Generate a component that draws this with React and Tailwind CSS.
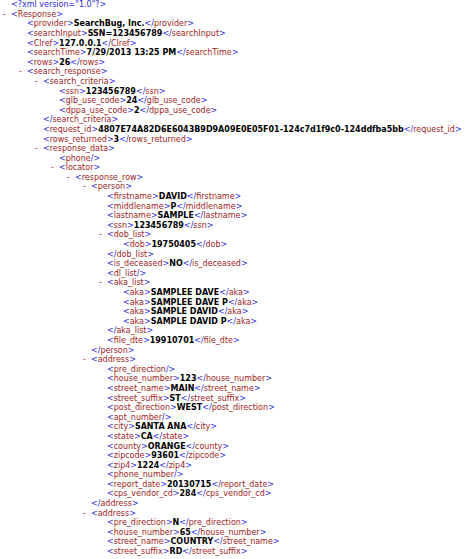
import React from "react";

const L = [
  { d: 0, pi: true },
  { d: 0, m: true, o: "Response" },
  { d: 1, o: "provider", v: "SearchBug, Inc.", c: "provider" },
  { d: 1, o: "searchInput", v: "SSN=123456789", c: "searchInput" },
  { d: 1, o: "Clref", v: "127.0.0.1", c: "Clref" },
  { d: 1, o: "searchTime", v: "7/29/2013 13:25 PM", c: "searchTime" },
  { d: 1, o: "rows", v: "26", c: "rows" },
  { d: 1, m: true, o: "search_response" },
  { d: 2, m: true, o: "search_criteria" },
  { d: 3, o: "ssn", v: "123456789", c: "ssn" },
  { d: 3, o: "glb_use_code", v: "24", c: "glb_use_code" },
  { d: 3, o: "dppa_use_code", v: "2", c: "dppa_use_code" },
  { d: 2, c: "search_criteria" },
  { d: 2, o: "request_id", v: "4807E74A82D6E6043B9D9A09E0E05F01-124c7d1f9c0-124ddfba5bb", c: "request_id" },
  { d: 2, o: "rows_returned", v: "3", c: "rows_returned" },
  { d: 2, m: true, o: "response_data" },
  { d: 3, s: "phone" },
  { d: 3, m: true, o: "locator" },
  { d: 4, m: true, o: "response_row" },
  { d: 5, m: true, o: "person" },
  { d: 6, o: "firstname", v: "DAVID", c: "firstname" },
  { d: 6, o: "middlename", v: "P", c: "middlename" },
  { d: 6, o: "lastname", v: "SAMPLE", c: "lastname" },
  { d: 6, o: "ssn", v: "123456789", c: "ssn" },
  { d: 6, m: true, o: "dob_list" },
  { d: 7, o: "dob", v: "19750405", c: "dob" },
  { d: 6, c: "dob_list" },
  { d: 6, o: "is_deceased", v: "NO", c: "is_deceased" },
  { d: 6, s: "dl_list" },
  { d: 6, m: true, o: "aka_list" },
  { d: 7, o: "aka", v: "SAMPLEE DAVE", c: "aka" },
  { d: 7, o: "aka", v: "SAMPLEE DAVE P", c: "aka" },
  { d: 7, o: "aka", v: "SAMPLE DAVID", c: "aka" },
  { d: 7, o: "aka", v: "SAMPLE DAVID P", c: "aka" },
  { d: 6, c: "aka_list" },
  { d: 6, o: "file_dte", v: "19910701", c: "file_dte" },
  { d: 5, c: "person" },
  { d: 5, m: true, o: "address" },
  { d: 6, s: "pre_direction" },
  { d: 6, o: "house_number", v: "123", c: "house_number" },
  { d: 6, o: "street_name", v: "MAIN", c: "street_name" },
  { d: 6, o: "street_suffix", v: "ST", c: "street_suffix" },
  { d: 6, o: "post_direction", v: "WEST", c: "post_direction" },
  { d: 6, s: "apt_number" },
  { d: 6, o: "city", v: "SANTA ANA", c: "city" },
  { d: 6, o: "state", v: "CA", c: "state" },
  { d: 6, o: "county", v: "ORANGE", c: "county" },
  { d: 6, o: "zipcode", v: "93601", c: "zipcode" },
  { d: 6, o: "zip4", v: "1224", c: "zip4" },
  { d: 6, s: "phone_number" },
  { d: 6, o: "report_date", v: "20130715", c: "report_date" },
  { d: 6, o: "cps_vendor_cd", v: "284", c: "cps_vendor_cd" },
  { d: 5, c: "address" },
  { d: 5, m: true, o: "address" },
  { d: 6, o: "pre_direction", v: "N", c: "pre_direction" },
  { d: 6, o: "house_number", v: "65", c: "house_number" },
  { d: 6, o: "street_name", v: "COUNTRY", c: "street_name" },
  { d: 6, o: "street_suffix", v: "RD", c: "street_suffix" },
];

const B = ({ children }) => <span className="text-[#2a2ae0]">{children}</span>;
const N = ({ children }) => <span className="text-[#a01c1c]">{children}</span>;

function Line({ l }) {
  return (
    <div className="flex h-[9.6px] items-center whitespace-nowrap">
      <div style={{ width: l.d * 16 }} className="shrink-0" />
      <div className="w-[11px] shrink-0 pl-[3px] text-[#e02020]">{l.m ? "-" : ""}</div>
      {l.pi ? (
        <B>&lt;?xml version="1.0"?&gt;</B>
      ) : (
        <>
          {l.o && (
            <>
              <B>&lt;</B>
              <N>{l.o}</N>
              <B>&gt;</B>
            </>
          )}
          {l.v && <span className="font-bold text-black">{l.v}</span>}
          {l.c && (
            <>
              <B>&lt;/</B>
              <N>{l.c}</N>
              <B>&gt;</B>
            </>
          )}
          {l.s && (
            <>
              <B>&lt;</B>
              <N>{l.s}</N>
              <B>/&gt;</B>
            </>
          )}
        </>
      )}
    </div>
  );
}

export default function App() {
  return (
    <div className="h-[559px] w-[474px] overflow-hidden bg-white font-['DejaVu_Sans',sans-serif] text-[8px] leading-[9.6px]">
      <div className="pt-[0.2px]">
        {L.map((l, i) => (
          <Line key={i} l={l} />
        ))}
      </div>
    </div>
  );
}
